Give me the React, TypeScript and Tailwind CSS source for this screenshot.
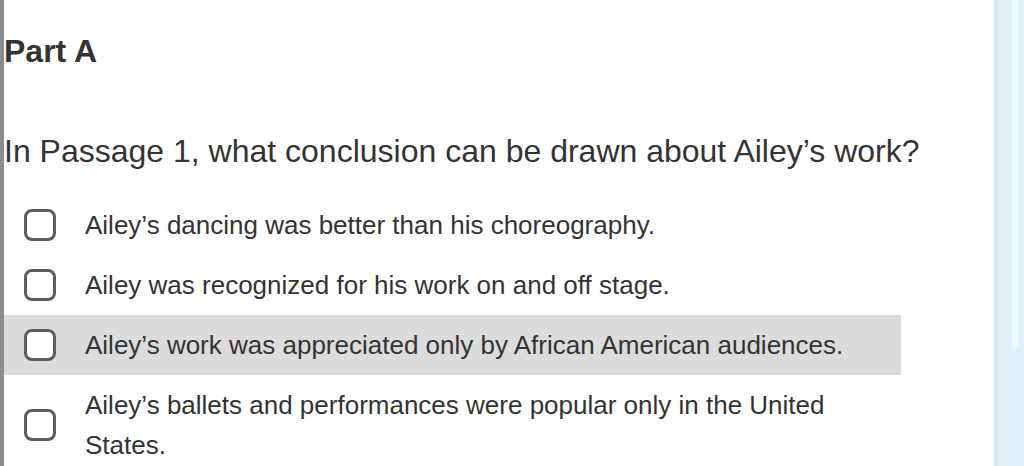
import React from "react";

const options = [
  "Ailey’s dancing was better than his choreography.",
  "Ailey was recognized for his work on and off stage.",
  "Ailey’s work was appreciated only by African American audiences.",
  "Ailey’s ballets and performances were popular only in the United States.",
];

function Box() {
  return (
    <span className="block w-[32px] h-[32px] shrink-0 rounded-[8px] border-[3px] border-[#5c5c60] bg-white" />
  );
}

export default function App() {
  return (
    <div
      className="flex w-[1024px] h-[466px] overflow-hidden bg-white text-[#333333]"
      style={{ fontFamily: '"Liberation Sans", Arial, sans-serif' }}
    >
      <main className="flex-1 border-l-[4px] border-[#8c8c8c] pt-[31px]">
        <h2 className="text-[32px] leading-[40px] font-bold">Part A</h2>
        <p className="mt-[60px] text-[32px] leading-[40px]">
          In Passage 1, what conclusion can be drawn about Ailey’s work?
        </p>
        <ul className="mt-[24px] w-[897px]">
          {options.map((o, i) => (
            <li
              key={i}
              className={`flex items-center py-[10px] pl-[20px] pr-[40px] ${
                i === 2 ? "bg-[#dcdcdc]" : ""
              }`}
            >
              <Box />
              <span className="ml-[29px] text-[26px] leading-[40px]">{o}</span>
            </li>
          ))}
        </ul>
      </main>
      <aside className="relative w-[30px] shrink-0 bg-[#e2effb]">
        <div className="absolute left-0 top-0 h-full w-[7px] bg-gradient-to-r from-[#d3e3f2] to-[#e2effb]" />
        <div className="absolute left-[18px] top-0 h-[349px] w-[6px] rounded-b-full bg-[#eff6fd]" />
      </aside>
    </div>
  );
}
